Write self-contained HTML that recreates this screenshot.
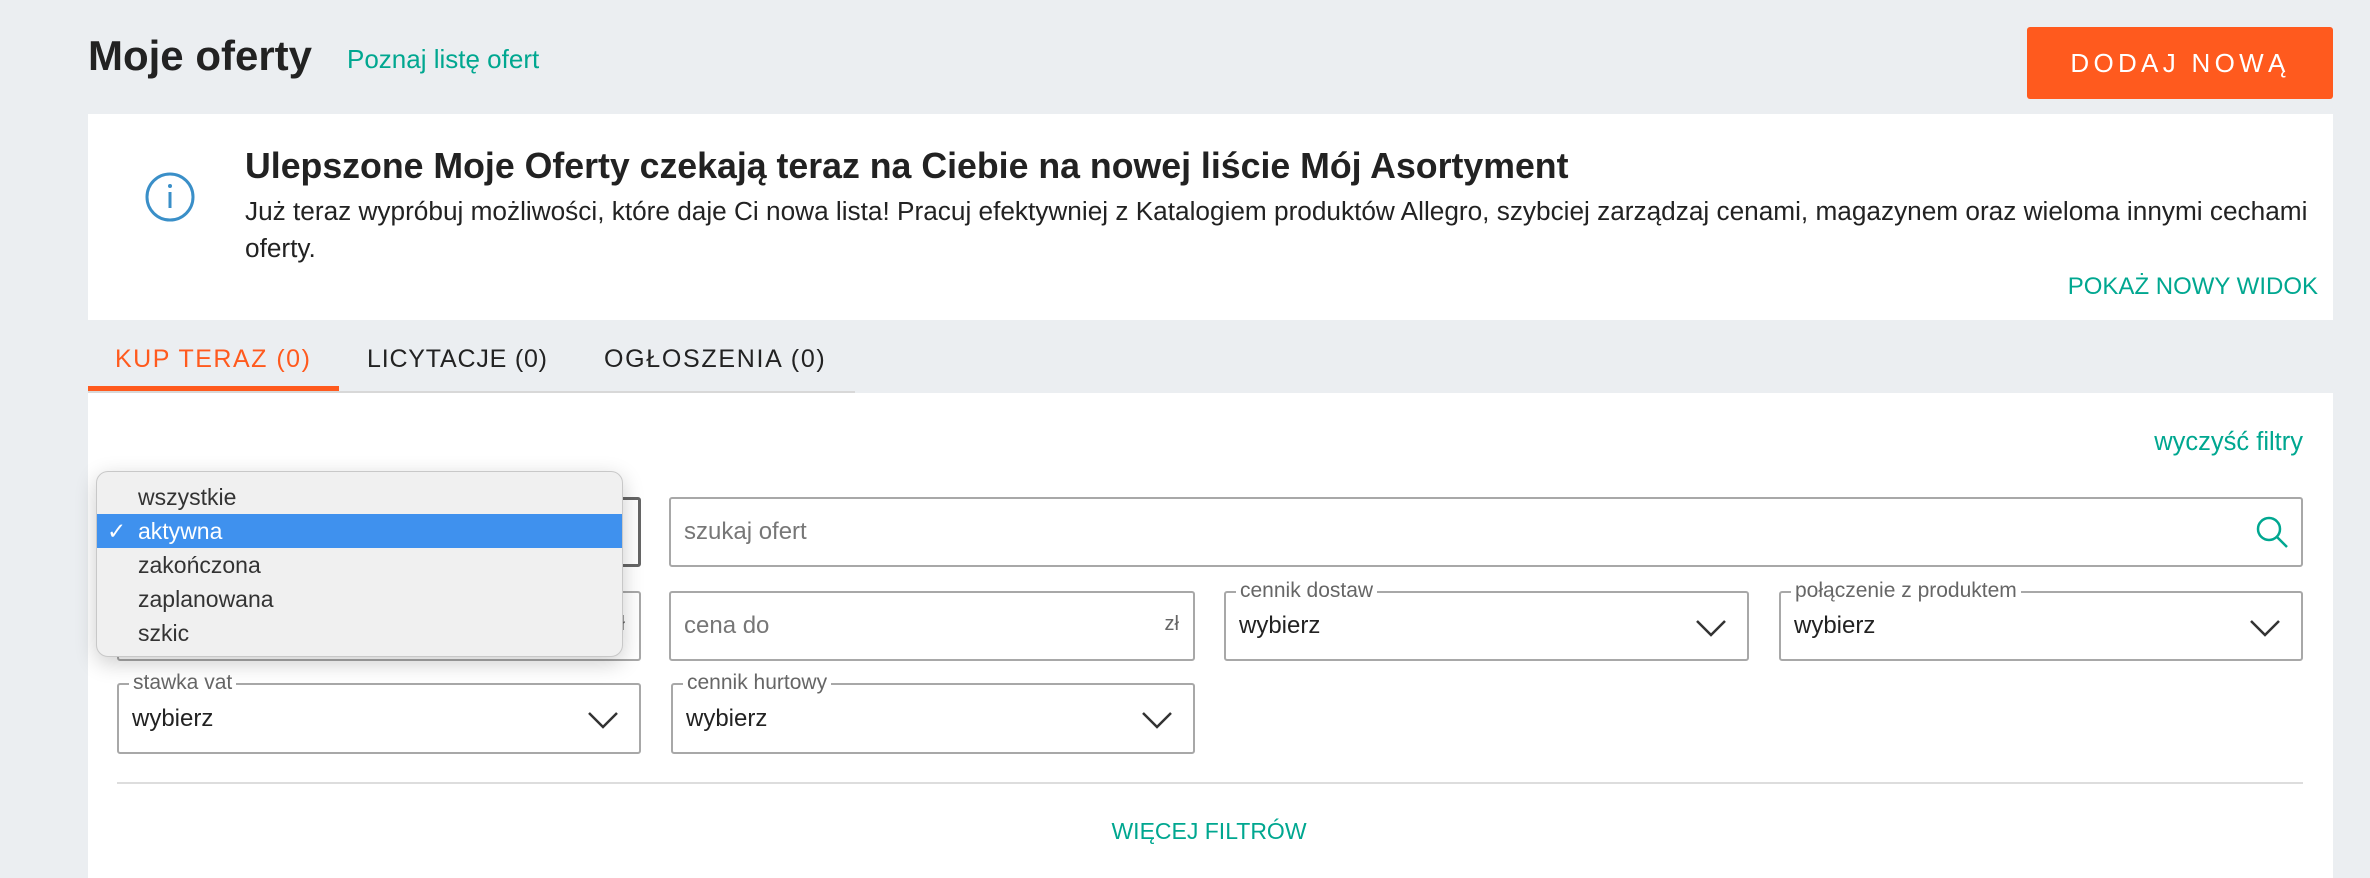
<!DOCTYPE html>
<html><head><meta charset="utf-8">
<style>
*{margin:0;padding:0;box-sizing:border-box}
html,body{width:2370px;height:878px;overflow:hidden;background:#ebeef1;font-family:"Liberation Sans",sans-serif;color:#222}
.a{position:absolute}
.teal{color:#00a790}
.box{position:absolute;border:2px solid #a8a8a8;border-radius:3px;background:#fff}
.lbl{position:absolute;top:-15px;left:10px;background:#fff;padding:0 4px;font-size:21px;color:#666;line-height:26px;white-space:nowrap}
.val{position:absolute;left:13px;top:0;bottom:0;display:flex;align-items:center;font-size:24px;color:#222}
.ph{color:#777}
.chev{position:absolute;right:20px;top:26px}
</style></head><body>
<div class="a" style="left:88px;top:28px;font-size:42px;font-weight:bold;color:#222;line-height:56px">Moje oferty</div>
<div class="a teal" style="left:347px;top:43px;font-size:26px;line-height:32px">Poznaj listę ofert</div>
<div class="a" style="left:2027px;top:27px;width:306px;height:72px;background:#ff5a1e;border-radius:3px;color:#fff;font-size:26px;letter-spacing:4.3px;display:flex;align-items:center;justify-content:center">DODAJ NOWĄ</div>

<div class="a" style="left:88px;top:114px;width:2245px;height:206px;background:#fff"></div>
<svg class="a" style="left:143px;top:170px" width="54" height="54" viewBox="0 0 54 54"><circle cx="27" cy="27" r="23" fill="none" stroke="#3a8fc8" stroke-width="3"/><line x1="27" y1="22" x2="27" y2="38" stroke="#3a8fc8" stroke-width="3"/><circle cx="27" cy="16" r="2" fill="#3a8fc8"/></svg>
<div class="a" style="left:245px;top:144px;font-size:35.7px;font-weight:bold;line-height:44px;white-space:nowrap">Ulepszone Moje Oferty czekają teraz na Ciebie na nowej liście Mój Asortyment</div>
<div class="a" style="left:245px;top:193px;width:2080px;font-size:26.2px;line-height:37px;color:#222">Już teraz wypróbuj możliwości, które daje Ci nowa lista! Pracuj efektywniej z Katalogiem produktów Allegro, szybciej zarządzaj cenami, magazynem oraz wieloma innymi cechami oferty.</div>
<div class="a teal" style="right:52px;top:272px;font-size:24px;line-height:30px">POKAŻ NOWY WIDOK</div>

<div class="a" style="left:115px;top:344px;font-size:25px;letter-spacing:1.5px;color:#ff5a1e;line-height:30px">KUP TERAZ (0)</div>
<div class="a" style="left:367px;top:344px;font-size:25px;letter-spacing:0.8px;color:#222;line-height:30px">LICYTACJE (0)</div>
<div class="a" style="left:604px;top:344px;font-size:25px;letter-spacing:1.7px;color:#222;line-height:30px">OGŁOSZENIA (0)</div>
<div class="a" style="left:88px;top:391px;width:767px;height:2px;background:#d8d8d8"></div>
<div class="a" style="left:88px;top:386px;width:251px;height:5px;background:#ff5a1e"></div>

<div class="a" style="left:88px;top:393px;width:2245px;height:485px;background:#fff"></div>
<div class="a teal" style="right:67px;top:427px;font-size:25.5px;line-height:30px">wyczyść filtry</div>

<div class="box" style="left:117px;top:497px;width:524px;height:70px;border:3px solid #666"></div>
<div class="box" style="left:669px;top:497px;width:1634px;height:70px"><div class="val ph">szukaj ofert</div>
<svg class="a" style="right:10px;top:16px" width="36" height="36" viewBox="0 0 36 36"><circle cx="14" cy="14" r="11" fill="none" stroke="#00a790" stroke-width="2.5"/><line x1="22" y1="22" x2="32" y2="32" stroke="#00a790" stroke-width="2.5"/></svg></div>

<div class="box" style="left:117px;top:591px;width:524px;height:70px"><div class="a" style="right:14px;top:20px;font-size:20px;color:#666">zł</div></div>
<div class="box" style="left:669px;top:591px;width:526px;height:70px"><div class="val ph">cena do</div><div class="a" style="right:14px;top:20px;font-size:20px;color:#666">zł</div></div>
<div class="box" style="left:1224px;top:591px;width:525px;height:70px"><div class="lbl">cennik dostaw</div><div class="val">wybierz</div>
<svg class="chev" width="32" height="18" viewBox="0 0 32 18"><path d="M2 2 L16 16 L30 2" fill="none" stroke="#333" stroke-width="2.5"/></svg></div>
<div class="box" style="left:1779px;top:591px;width:524px;height:70px"><div class="lbl">połączenie z produktem</div><div class="val">wybierz</div>
<svg class="chev" width="32" height="18" viewBox="0 0 32 18"><path d="M2 2 L16 16 L30 2" fill="none" stroke="#333" stroke-width="2.5"/></svg></div>

<div class="box" style="left:117px;top:683px;width:524px;height:71px"><div class="lbl">stawka vat</div><div class="val">wybierz</div>
<svg class="chev" width="32" height="18" viewBox="0 0 32 18"><path d="M2 2 L16 16 L30 2" fill="none" stroke="#333" stroke-width="2.5"/></svg></div>
<div class="box" style="left:671px;top:683px;width:524px;height:71px"><div class="lbl">cennik hurtowy</div><div class="val">wybierz</div>
<svg class="chev" width="32" height="18" viewBox="0 0 32 18"><path d="M2 2 L16 16 L30 2" fill="none" stroke="#333" stroke-width="2.5"/></svg></div>

<div class="a" style="left:117px;top:782px;width:2186px;height:2px;background:#dddddd"></div>
<div class="a teal" style="left:0;width:2418px;text-align:center;top:816px;font-size:23px;line-height:30px">WIĘCEJ FILTRÓW</div>

<div class="a" style="left:96px;top:471px;width:527px;height:186px;background:#f0f0f0;border:1px solid #c8c8c8;border-radius:12px;box-shadow:0 6px 22px rgba(0,0,0,0.2);overflow:hidden;font-size:23px;color:#333">
<div class="a" style="left:41px;top:10px;line-height:30px">wszystkie</div>
<div class="a" style="left:0;top:42px;width:100%;height:34px;background:#3f91ee;color:#fff"><span class="a" style="left:10px;top:2px;line-height:30px">✓</span><span class="a" style="left:41px;top:2px;line-height:30px">aktywna</span></div>
<div class="a" style="left:41px;top:78px;line-height:30px">zakończona</div>
<div class="a" style="left:41px;top:112px;line-height:30px">zaplanowana</div>
<div class="a" style="left:41px;top:146px;line-height:30px">szkic</div>
</div>
</body></html>
